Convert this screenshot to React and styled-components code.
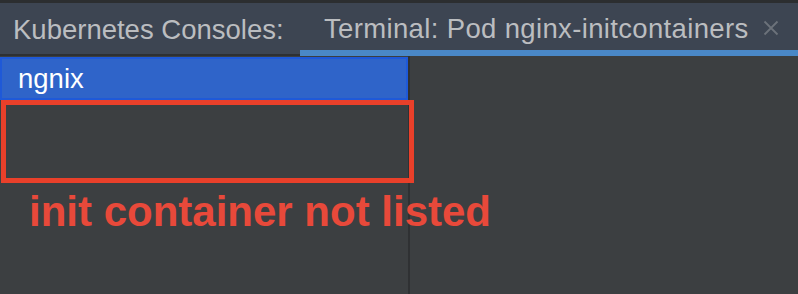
import React from "react";
import styled, { createGlobalStyle } from "styled-components";

const GlobalStyle = createGlobalStyle`
  html, body {
    margin: 0;
    padding: 0;
    background: #3c3f41;
    font-family: "Liberation Sans", Arial, sans-serif;
  }
`;

const Window = styled.div`
  position: relative;
  width: 798px;
  height: 294px;
  overflow: hidden;
  background: #3c3f41;
  display: flex;
  flex-direction: column;
`;

const TopStrip = styled.div`
  height: 3px;
  background: #2c2e30;
`;

const Header = styled.div`
  height: 53px;
  display: flex;
  align-items: stretch;
  background: #3d4552;
  font-size: 27.5px;
  color: #bbbdc0;
`;

const Label = styled.div`
  width: 287px;
  padding-left: 13px;
  display: flex;
  align-items: center;
  padding-top: 2px;
  border-bottom: 2px solid #2e3033;
  white-space: nowrap;
`;

const Tab = styled.div`
  flex: 1;
  display: flex;
  align-items: center;
  padding-left: 24px;
  padding-top: 4px;
  border-bottom: 6px solid #4a88c7;
  white-space: nowrap;
  letter-spacing: 0.35px;
`;

const Close = styled.svg`
  margin-left: 14px;
  width: 16px;
  height: 16px;
  margin-top: -2px;
`;

const Body = styled.div`
  flex: 1;
  display: flex;
`;

const ListPanel = styled.div`
  width: 408px;
  border-right: 2px solid #2f3133;
  display: flex;
  flex-direction: column;
`;

const Row = styled.div`
  height: 38px;
  margin-top: 1px;
  border: 2px solid ${(p) => (p.$selected ? "#1f59d8" : "transparent")};
  background: ${(p) => (p.$selected ? "#2f64c9" : "transparent")};
  color: #ffffff;
  font-size: 27.5px;
  padding-left: 16px;
  display: flex;
  align-items: center;
  padding-top: 1px;
`;

const Terminal = styled.div`
  flex: 1;
`;

const Callout = styled.div`
  position: absolute;
  left: 1px;
  top: 100px;
  width: 403px;
  height: 73px;
  border: 5px solid #e9402a;
`;

const Note = styled.div`
  position: absolute;
  left: 29px;
  top: 188px;
  font-size: 42px;
  font-weight: bold;
  color: #e8493a;
  white-space: nowrap;
`;

export default function App() {
  return (
    <>
      <GlobalStyle />
      <Window>
        <TopStrip />
        <Header>
          <Label>Kubernetes Consoles:</Label>
          <Tab>
            Terminal: Pod nginx-initcontainers
            <Close viewBox="0 0 16 16">
              <path
                d="M1.5 1.5 L14.5 14.5 M14.5 1.5 L1.5 14.5"
                stroke="#6c727a"
                strokeWidth="1.8"
                fill="none"
              />
            </Close>
          </Tab>
        </Header>
        <Body>
          <ListPanel>
            <Row $selected>ngnix</Row>
          </ListPanel>
          <Terminal />
        </Body>
        <Callout />
        <Note>init container not listed</Note>
      </Window>
    </>
  );
}
